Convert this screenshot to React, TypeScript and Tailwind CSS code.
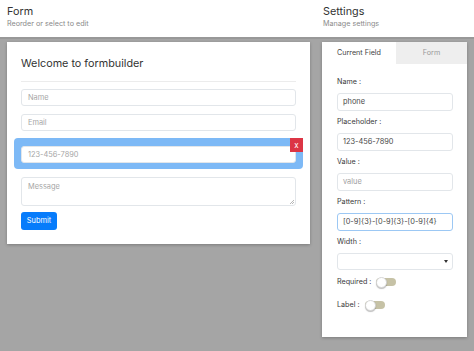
import React from "react";

function Toggle() {
  return (
    <div className="relative w-[20px] h-[11px] flex items-center">
      <div className="absolute left-0 right-0 h-[8px] rounded-full bg-[#c6c2a6]" />
      <div className="absolute left-0 w-[11px] h-[11px] rounded-full bg-white border border-[#d6d6d6] shadow-[0_1px_1px_rgba(0,0,0,0.25)]" />
    </div>
  );
}

function LeftInput({ placeholder }: { placeholder: string }) {
  return (
    <div className="h-[17px] w-full rounded-[3px] border border-[#e2e6ea] bg-white px-[6px] flex items-center text-[7.4px] text-[#a6a6a6]">
      {placeholder}
    </div>
  );
}

function Field({
  label,
  value,
  muted,
  focus,
}: {
  label: string;
  value: string;
  muted?: boolean;
  focus?: boolean;
}) {
  return (
    <div className="flex flex-col">
      <div className="h-[12px] leading-[12px] text-[7.2px] text-[#3a3a3a]">{label}</div>
      <div
        className={
          "mt-[5px] h-[18px] rounded-[3px] border bg-white px-[5px] flex items-center text-[7.4px] " +
          (focus ? "border-[#9cc8f4] " : "border-[#e2e6ea] ") +
          (muted ? "text-[#a0a0a0]" : "text-[#4a4a4a]")
        }
      >
        {value}
      </div>
    </div>
  );
}

export default function App() {
  return (
    <div className="w-[474px] h-[351px] flex flex-col bg-[#a5a5a5] overflow-hidden font-[Inter,sans-serif]">
      <div className="h-[37px] bg-white flex shrink-0">
        <div className="w-[323px] pl-[7px] pt-[5px]">
          <div className="text-[10.8px] leading-[13px] text-[#333]">Form</div>
          <div className="text-[7.2px] leading-[9px] mt-[1px] text-[#8a8a8a]">Reorder or select to edit</div>
        </div>
        <div className="pt-[5px]">
          <div className="text-[10.8px] leading-[13px] text-[#333]">Settings</div>
          <div className="text-[7.2px] leading-[9px] mt-[1px] text-[#8a8a8a]">Manage settings</div>
        </div>
      </div>
      <div className="flex-1 border-t-2 border-[#989898] flex items-start gap-[12px] px-[7px] pt-[3px]">
        <div className="w-[303px] h-[202px] bg-white shadow-[0_1px_3px_rgba(0,0,0,0.25)] px-[14px] pt-[15px] flex flex-col">
          <div className="text-[10.8px] leading-[14px] text-[#333]">Welcome to formbuilder</div>
          <div className="mt-[10px] border-t border-[#ececec]" />
          <div className="mt-[7px]">
            <LeftInput placeholder="Name" />
          </div>
          <div className="mt-[8px]">
            <LeftInput placeholder="Email" />
          </div>
          <div className="relative mt-[7px] -mx-[7px] px-[7px] pt-[8px] pb-[6px] rounded-[4px] bg-[#7db9f6]">
            <LeftInput placeholder="123-456-7890" />
            <div className="absolute right-0 top-0 w-[13px] h-[14px] bg-[#dc3545] text-white text-[8px] leading-none flex items-center justify-center">
              x
            </div>
          </div>
          <div className="mt-[8px] h-[29px] rounded-[3px] border border-[#e2e6ea] px-[6px] pt-[3px] text-[7.4px] text-[#a6a6a6] relative">
            Message
            <svg className="absolute right-[1px] bottom-[1px]" width="4" height="4" viewBox="0 0 4 4">
              <path d="M4 0 L0 4 M4 2 L2 4" stroke="#999" strokeWidth="0.7" />
            </svg>
          </div>
          <div className="mt-[6px] w-[36px] h-[18px] rounded-[3px] bg-[#077cfb] text-white text-[7.4px] flex items-center justify-center">
            Submit
          </div>
        </div>
        <div className="w-[145px] h-[295px] bg-white shadow-[0_1px_3px_rgba(0,0,0,0.25)] flex flex-col">
          <div className="flex h-[22px] shrink-0">
            <div className="w-[74px] flex items-center justify-center text-[7.2px] text-[#444]">Current Field</div>
            <div className="flex-1 bg-[#eeeeee] flex items-center justify-center text-[7.2px] text-[#9a9a9a]">Form</div>
          </div>
          <div className="pl-[15px] pr-[14px] pt-[12px] flex flex-col gap-[5px]">
            <Field label="Name :" value="phone" />
            <Field label="Placeholder :" value="123-456-7890" />
            <Field label="Value :" value="value" muted />
            <Field label="Pattern :" value="[0-9]{3}-[0-9]{3}-[0-9]{4}" focus />
            <div className="flex flex-col">
              <div className="h-[12px] leading-[12px] text-[7.2px] text-[#3a3a3a]">Width :</div>
              <div className="mt-[5px] h-[17px] rounded-[3px] border border-[#e2e6ea] bg-white pr-[4px] flex items-center justify-end">
                <svg width="4" height="3" viewBox="0 0 4 3">
                  <path d="M0 0 L4 0 L2 3 Z" fill="#333" />
                </svg>
              </div>
            </div>
            <div className="mt-[1px] flex items-center h-[12px] gap-[5px]">
              <span className="text-[7.2px] text-[#3a3a3a]">Required :</span>
              <Toggle />
            </div>
            <div className="mt-[6px] flex items-center h-[12px] gap-[5px]">
              <span className="text-[7.2px] text-[#3a3a3a]">Label :</span>
              <Toggle />
            </div>
          </div>
        </div>
      </div>
    </div>
  );
}
